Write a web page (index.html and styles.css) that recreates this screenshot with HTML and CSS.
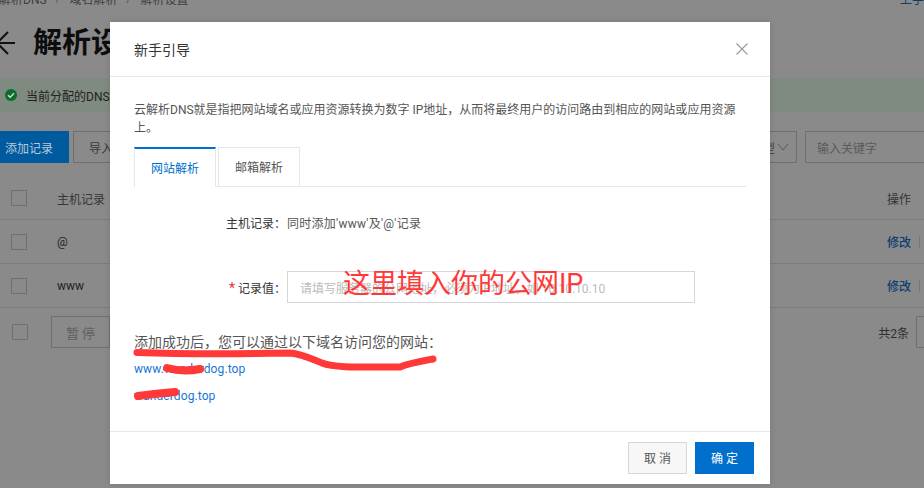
FILE: index.html
```html
<!DOCTYPE html>
<html lang="zh-CN">
<head>
<meta charset="utf-8">
<title>解析设置</title>
<link rel="stylesheet" href="styles.css">
</head>
<body>
<div class="page">
  <div class="crumbs">
    <span>解析DNS</span><i>/</i><span>域名解析</span><i>/</i><span>解析设置</span>
    <span class="top-link">上手指引</span>
  </div>
  <div class="title-row">
    <svg class="back" width="16" height="26" viewBox="0 0 16 26"><path d="M8 2 L-3 13 L8 24 M-3 13 H15" fill="none" stroke="#111" stroke-width="2"/></svg>
    <h1>解析设置</h1>
  </div>
  <div class="notice">
    <svg width="12" height="12" viewBox="0 0 12 12"><circle cx="6" cy="6" r="6" fill="#0d6b2c"/><path d="M3 6.2 L5.2 8.2 L9 4.2" fill="none" stroke="#cfe3d3" stroke-width="1.4"/></svg>
    <span>当前分配的DNS服务器地址</span>
  </div>
  <div class="toolbar">
    <button class="btn primary">添加记录</button>
    <button class="btn plain">导入/导出</button>
    <span class="grow"></span>
    <span class="select">全部类型<svg width="12" height="8" viewBox="0 0 12 8"><path d="M1 1 L6 7 L11 1" fill="none" stroke="#5a5a5a"/></svg></span>
    <span class="search">输入关键字</span>
  </div>
  <div class="row head">
    <span class="check"></span><span class="host">主机记录</span><span class="grow"></span><span class="op">操作</span>
  </div>
  <div class="row">
    <span class="check"></span><span class="host value">@</span><span class="grow"></span><span class="op link">修改</span><i class="sep"></i>
  </div>
  <div class="row">
    <span class="check"></span><span class="host value">www</span><span class="grow"></span><span class="op link">修改</span><i class="sep"></i>
  </div>
  <div class="foot">
    <span class="check"></span><button class="btn pause">暂 停</button><span class="grow"></span><span class="total">共2条</span><span class="pager"></span>
  </div>
</div>

<section class="modal">
  <header class="modal-head">
    <h2>新手引导</h2>
    <svg width="12" height="12" viewBox="0 0 12 12"><path d="M.5 .5 L11.5 11.5 M11.5 .5 L.5 11.5" fill="none" stroke="#999" stroke-width="1.1"/></svg>
  </header>
  <div class="modal-body">
    <p class="intro">云解析DNS就是指把网站域名或应用资源转换为数字 IP地址，从而将最终用户的访问路由到相应的网站或应用资源上。</p>
    <div class="tabs">
      <span class="tab active">网站解析</span>
      <span class="tab">邮箱解析</span>
    </div>
    <div class="field first">
      <span class="label">主机记录：</span>
      <span class="info">同时添加'www'及'@'记录</span>
    </div>
    <div class="field second">
      <span class="label"><b>*</b> 记录值：</span>
      <span class="input">请填写服务器的公网地址，必须为IP地址，如 10.10.10.10</span>
    </div>
    <p class="success">添加成功后，您可以通过以下域名访问您的网站：</p>
    <a class="domain one">www.wanderdog.top</a>
    <a class="domain">wanderdog.top</a>
  </div>
  <footer class="modal-foot">
    <button class="btn cancel">取 消</button>
    <button class="btn confirm">确 定</button>
  </footer>
</section>

<svg class="marks" width="924" height="488" viewBox="0 0 924 488">
  <path d="M137 352.5 C180 354 240 354 290 353 C302 354 312 359 322 363 C335 368 360 367 400 367 C410 363 422 361 433 359" />
  <path class="blot" d="M167 368 C178 371 190 371 200 369" />
  <path class="blot" d="M138 396 C150 394 163 393 175 392" />
</svg>
<div class="note">这里填入你的公网IP</div>
</body>
</html>
```

FILE: styles.css
```css
* { box-sizing: border-box; }
html, body { margin: 0; height: 100%; overflow: hidden; }
body {
  background: #8a8a8a;
  font-family: Roboto, "Noto Sans CJK SC", sans-serif;
  font-size: 12px;
  color: #3a3a3a;
  position: relative;
}
.grow { flex: 1; }
.btn { font: inherit; border: 0; padding: 0; }

.page { width: 924px; height: 488px; overflow: hidden; }
.crumbs {
  display: flex;
  height: 18px;
  margin-top: -11px;
  align-items: center;
  color: #3f3f3f;
  margin-left: -1px;
}
.crumbs i { font-style: normal; margin: 0 9px; color: #5a5a5a; }
.top-link { margin-left: auto; margin-right: -24px; color: #0b3d66; }

.title-row { display: flex; align-items: center; height: 42px; margin-top: 15px; }
.back { flex: none; }
.title-row h1 { margin: 0 0 0 17px; font-size: 29px; line-height: 42px; font-weight: 700; color: #0d0d0d; white-space: nowrap; }

.notice {
  display: flex;
  align-items: center;
  gap: 9px;
  height: 34px;
  margin-top: 14px;
  padding-left: 5px;
  background: #7f8a80;
  color: #222;
}

.toolbar { display: flex; height: 32px; margin-top: 19px; margin-left: -12px; }
.primary { width: 81px; background: #005a9e; color: #b9c9d8; text-align: right; padding-right: 16px; }
.plain { width: 90px; margin-left: 4px; border: 1px solid #6f6f6f; background: transparent; color: #3a3a3a; text-align: left; padding-left: 15px; }
.select { width: 100px; display: flex; align-items: center; justify-content: flex-end; gap: 2px; padding-right: 7px; border: 1px solid #6f6f6f; color: #3a3a3a; }
.search { width: 131px; margin-left: 8px; margin-right: -12px; border: 1px solid #6f6f6f; display: flex; align-items: center; padding-left: 11px; color: #5a5a5a; }

.row {
  display: flex;
  align-items: center;
  height: 44px;
  border-bottom: 1px solid #7b7b7b;
  padding-left: 11px;
}
.row.head { height: 43px; margin-top: 14px; }
.check { width: 16px; height: 16px; border: 1px solid #6f6f6f; flex: none; }
.host { margin-left: 30px; color: #363636; }
.host.value { color: #1f1f1f; }
.op { margin-right: 13px; color: #333; }
.op.link { color: #0b3d73; font-weight: 500; margin-right: 8px; }
.sep { width: 1px; height: 12px; background: #777; margin-right: 4px; }

.foot { display: flex; align-items: center; height: 32px; margin-top: 8px; padding-left: 12px; }
.pause { width: 59px; height: 32px; margin-left: 23px; background: transparent; border: 1px solid #6f6f6f; color: #5f5f5f; font-size: 13px; }
.total { color: #2e2e2e; margin-right: 7px; }
.pager { width: 16px; height: 32px; margin-right: -8px; border: 1px solid #6f6f6f; }

.modal {
  position: absolute;
  left: 110px;
  top: 22px;
  width: 660px;
  height: 462px;
  display: flex;
  flex-direction: column;
  background: #fff;
  box-shadow: 0 0 6px rgba(0, 0, 0, .12);
}
.modal-head {
  flex: none;
  height: 55px;
  display: flex;
  align-items: center;
  justify-content: space-between;
  padding: 0 22px 0 24px;
  border-bottom: 1px solid #e5e8ee;
}
.modal-head h2 { margin: 0; font-size: 14px; font-weight: 400; color: #333; }
.modal-body { flex: 1; padding: 24px 24px 0; }
.intro { margin: 0; line-height: 18px; color: #555; }
.tabs { display: flex; gap: 2px; height: 40px; margin-top: 10px; border-bottom: 1px solid #e3e8ee; }
.tab {
  width: 82px;
  height: 40px;
  display: flex;
  align-items: center;
  justify-content: center;
  padding-bottom: 2px;
  border: 1px solid #e3e8ee;
  border-bottom: 0;
  color: #555;
}
.tab.active { background: #fff; border-top: 2px solid #0070cc; color: #0070cc; }
.field { display: grid; grid-template-columns: 153px 1fr; align-items: center; }
.field.first { margin-top: 25px; height: 20px; }
.field.second { margin-top: 39px; height: 32px; width: 561px; }
.label { text-align: right; color: #333; margin-right: 1px; }
.label b { color: #e3323c; font-weight: 400; font-size: 14px; }
.info { color: #555; letter-spacing: .27px; }
.input {
  height: 32px;
  border: 1px solid #d7d7d7;
  display: flex;
  align-items: center;
  padding-left: 12px;
  color: #bbb;
  white-space: nowrap;
  overflow: hidden;
}
.success { margin: 30px 0 0; font-size: 14px; line-height: 18px; color: #555; white-space: nowrap; }
.domain { display: block; color: #1676d6; font-size: 12px; line-height: 18px; margin-top: 9px; letter-spacing: .1px; }
.modal-foot {
  flex: none;
  height: 53px;
  display: flex;
  gap: 8px;
  justify-content: flex-end;
  align-items: flex-start;
  padding: 10px 16px 0 0;
  border-top: 1px solid #e5e8ee;
}
.cancel { width: 59px; height: 32px; background: #f7f7f7; border: 1px solid #d7d7d7; color: #555; padding-bottom: 2px; }
.confirm { width: 59px; height: 32px; background: #0070cc; color: #fff; padding-bottom: 2px; }

.marks { position: absolute; left: 0; top: 0; pointer-events: none; }
.marks path { fill: none; stroke: #ff3838; stroke-width: 7; stroke-linecap: round; stroke-linejoin: round; }
.marks .blot { stroke-width: 8; }
.note {
  position: absolute;
  left: 343px;
  top: 266px;
  font-size: 27px;
  line-height: 36px;
  font-weight: 400;
  color: #ff3838;
  white-space: nowrap;
}
```
